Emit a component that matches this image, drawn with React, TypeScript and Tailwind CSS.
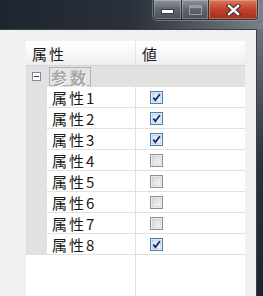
import React from "react";

// Windows 7 style property grid: a category row ("参数") with eight boolean properties.
const props = [
  { name: "属性1", on: true },
  { name: "属性2", on: true },
  { name: "属性3", on: true },
  { name: "属性4", on: false },
  { name: "属性5", on: false },
  { name: "属性6", on: false },
  { name: "属性7", on: false },
  { name: "属性8", on: true },
];

function CheckBox({ on }: { on: boolean }) {
  if (on) {
    return (
      <svg width="13" height="13" viewBox="0 0 13 13" className="block">
        <defs>
          <linearGradient id="cbOn" x1="0" y1="0" x2="1" y2="1">
            <stop offset="0" stopColor="#cfe6f7" />
            <stop offset="1" stopColor="#eef7fd" />
          </linearGradient>
        </defs>
        <rect x="0.5" y="0.5" width="12" height="12" fill="#fff" stroke="#4f7eaa" />
        <rect x="2" y="2" width="9" height="9" fill="url(#cbOn)" stroke="#8cb4d8" strokeWidth="0.6" />
        <path d="M3.4 6.6 L5.4 9.2 L9.8 3.2" fill="none" stroke="#18266a" strokeWidth="1.8" />
      </svg>
    );
  }
  return (
    <svg width="13" height="13" viewBox="0 0 13 13" className="block">
      <defs>
        <linearGradient id="cbOff" x1="0" y1="0" x2="1" y2="1">
          <stop offset="0" stopColor="#d6d6d6" />
          <stop offset="1" stopColor="#f6f6f6" />
        </linearGradient>
      </defs>
      <rect x="0.5" y="0.5" width="12" height="12" fill="#fff" stroke="#8e8f8f" />
      <rect x="2" y="2" width="9" height="9" fill="url(#cbOff)" stroke="#bdbdbd" strokeWidth="0.6" />
    </svg>
  );
}

function CaptionButtons() {
  return (
    <div className="flex h-[20px] overflow-hidden rounded-b-[4px] border border-t-0 border-[#2d3138] shadow-[0_0_0_1px_rgba(200,205,212,0.35)]">
      <div className="flex w-[28px] items-center justify-center border-r border-[#2d3138] bg-gradient-to-b from-[#8d939b] via-[#5f666f] to-[#4a5058] shadow-[inset_0_0_0_1px_rgba(255,255,255,0.25)]">
        <div className="mt-[4px] h-[3px] w-[11px] bg-white shadow-[0_0_0_1px_#3a3f46]" />
      </div>
      <div className="flex w-[27px] items-center justify-center border-r border-[#2d3138] bg-gradient-to-b from-[#8d939b] via-[#5f666f] to-[#4a5058] shadow-[inset_0_0_0_1px_rgba(255,255,255,0.25)]">
        <div className="h-[10px] w-[13px] border border-t-[3px] border-[#9a9ea3]" />
      </div>
      <div className="flex w-[48px] items-center justify-center bg-gradient-to-b from-[#d9785f] via-[#c2412a] to-[#a52f1b] shadow-[inset_0_0_0_1px_rgba(255,210,190,0.35)]">
        <svg width="15" height="12" viewBox="0 0 15 12">
          <path d="M3 2 L12 10 M12 2 L3 10" stroke="#3b2a28" strokeWidth="4.4" strokeLinecap="square" />
          <path d="M3 2 L12 10 M12 2 L3 10" stroke="#ffffff" strokeWidth="2.4" strokeLinecap="square" />
        </svg>
      </div>
    </div>
  );
}

export default function App() {
  return (
    <div
      className="flex h-[296px] w-[263px] flex-col overflow-hidden bg-[#1c2630]"
      style={{ fontFamily: '"Noto Sans CJK JP", "Liberation Sans", sans-serif' }}
    >
      {/* Title bar */}
      <div className="flex h-[29px] shrink-0 items-start justify-end bg-gradient-to-r from-[#1d2530] via-[#2b313a] to-[#7a8088] pr-[5px]">
        <CaptionButtons />
      </div>

      <div className="flex min-h-0 flex-1">
        {/* Client area */}
        <div className="flex w-[257px] flex-col border-t border-r border-[#3c4046] bg-[#f0f0f0] pl-[26px] pr-[11px] pt-[11px]">
          <div className="flex flex-1 flex-col bg-white text-[15px] leading-none text-[#1a1a1a]">
            {/* Header */}
            <div className="flex h-[25px] shrink-0 border-b border-[#d5d5d5] bg-gradient-to-b from-[#ffffff] via-[#f7f8f9] to-[#eceef0]">
              <div className="flex w-[110px] items-center border-r border-[#e4e4e4] pl-[6px] tracking-[2px]">属性</div>
              <div className="flex flex-1 items-center pl-[6px]">値</div>
            </div>

            {/* Category row */}
            <div className="flex h-[21px] shrink-0 items-center bg-[#e1e1e1]">
              <div className="ml-[6px] flex h-[9px] w-[9px] items-center justify-center border border-[#7d8ea0] bg-white">
                <div className="h-[1px] w-[5px] bg-[#2a3a4a]" />
              </div>
              <div className="ml-[8px] flex h-[19px] w-[42px] items-center justify-center border border-[#b2b2b2] bg-[#e4e4e4] text-[16px] font-bold tracking-[3px] text-[#a8a8a8] [text-shadow:1px_1px_0_#ffffff]">
                参数
              </div>
            </div>

            {/* Properties */}
            {props.map((p) => (
              <div key={p.name} className="flex h-[21px] shrink-0">
                <div className="w-[21px] bg-[#e1e1e1]" />
                <div className="flex w-[89px] items-center border-r border-b border-[#e1e1e1] pl-[5px] tracking-[2px]">
                  {p.name}
                </div>
                <div className="flex flex-1 items-center border-b border-[#e1e1e1] pl-[14px]">
                  <CheckBox on={p.on} />
                </div>
              </div>
            ))}

            {/* Empty remainder */}
            <div className="flex flex-1">
              <div className="w-[110px] border-r border-[#e1e1e1]" />
            </div>
          </div>
        </div>
        {/* Window frame */}
        <div className="flex-1 bg-gradient-to-b from-[#6d737b] via-[#2a333c] to-[#1a2530]" />
      </div>
    </div>
  );
}
